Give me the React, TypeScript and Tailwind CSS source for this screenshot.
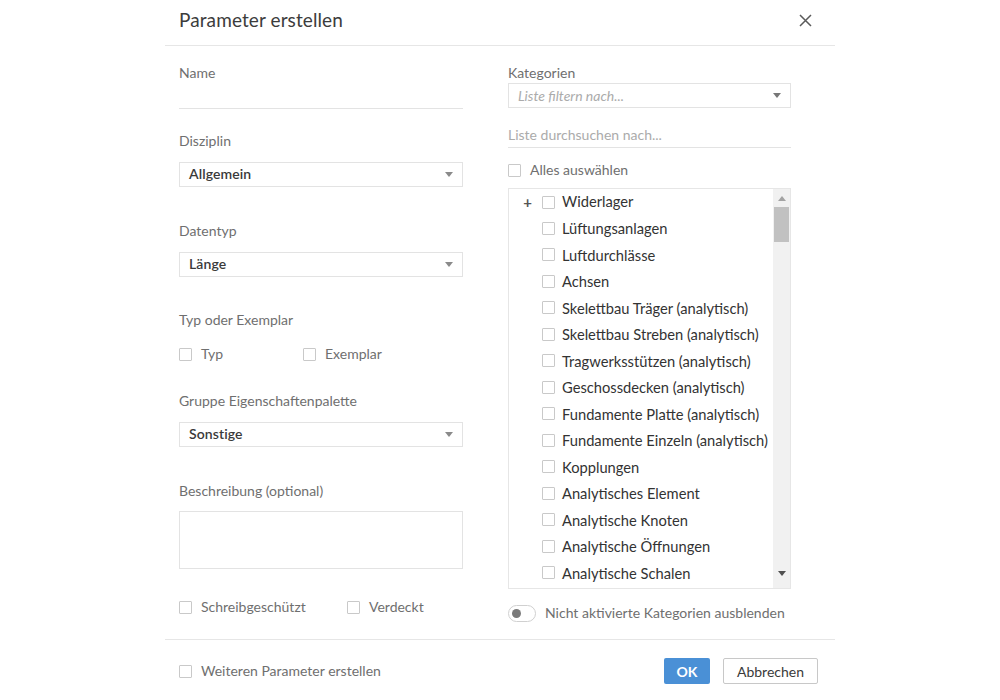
import React from "react";

const font = { fontFamily: "Lato, 'Noto Sans', sans-serif" };

function Box({ className = "" }: { className?: string }) {
  return <span className={"inline-block w-[13px] h-[13px] border border-[#c9c9c9] bg-white rounded-[1px] shrink-0 " + className} />;
}

function Caret({ color = "#8a8a8a" }: { color?: string }) {
  return (
    <svg width="8" height="5" viewBox="0 0 8 5" className="shrink-0">
      <path d="M0 0 L8 0 L4 5 Z" fill={color} />
    </svg>
  );
}

function Label({ children }: { children: React.ReactNode }) {
  return <div className="h-5 leading-5 text-[14px] text-[#6f6f6f]">{children}</div>;
}

function Select({ value }: { value: string }) {
  return (
    <div className="h-[25px] border border-[#e3e3e3] bg-white flex items-center justify-between pl-[9px] pr-[9px]">
      <span className="text-[14px] leading-[20px] -mt-[2px] text-[#3a3a3a] font-semibold tracking-[0.1px]">{value}</span>
      <Caret />
    </div>
  );
}

function Check({ label, className = "" }: { label: string; className?: string }) {
  return (
    <div className={"flex items-center h-5 " + className}>
      <Box />
      <span className="ml-[9px] text-[14px] leading-[20px] -mt-[1px] text-[#6f6f6f]">{label}</span>
    </div>
  );
}

const items = [
  "Widerlager",
  "Lüftungsanlagen",
  "Luftdurchlässe",
  "Achsen",
  "Skelettbau Träger (analytisch)",
  "Skelettbau Streben (analytisch)",
  "Tragwerksstützen (analytisch)",
  "Geschossdecken (analytisch)",
  "Fundamente Platte (analytisch)",
  "Fundamente Einzeln (analytisch)",
  "Kopplungen",
  "Analytisches Element",
  "Analytische Knoten",
  "Analytische Öffnungen",
  "Analytische Schalen",
];

export default function App() {
  return (
    <div className="w-[1000px] h-[700px] bg-white overflow-hidden" style={font}>
      <div className="w-[670px] mx-auto flex flex-col h-[700px]">
        {/* Header */}
        <div className="h-[46px] border-b border-[#e6e6e6] flex items-center justify-between pl-[14px] pr-[23px] shrink-0">
          <span className="text-[19px] text-[#3c3c3c] pb-[5px] tracking-[0.1px]">Parameter erstellen</span>
          <svg width="13" height="13" viewBox="0 0 13 13" className="mb-[5px]">
            <path d="M1 1 L12 12 M12 1 L1 12" stroke="#5a5a5a" strokeWidth="1.5" />
          </svg>
        </div>

        {/* Body */}
        <div className="h-[594px] border-b border-[#e6e6e6] flex pl-[14px] pt-[17px] shrink-0">
          {/* Left column */}
          <div className="w-[284px] flex flex-col">
            <Label>Name</Label>
            <div className="h-[26px] border-b border-[#e3e3e3]" />
            <div className="mt-[22px]"><Label>Disziplin</Label></div>
            <div className="mt-[11px]"><Select value="Allgemein" /></div>
            <div className="mt-[34px]"><Label>Datentyp</Label></div>
            <div className="mt-[11px]"><Select value="Länge" /></div>
            <div className="mt-[33px]"><Label>Typ oder Exemplar</Label></div>
            <div className="mt-[14px] flex">
              <Check label="Typ" className="w-[124px]" />
              <Check label="Exemplar" />
            </div>
            <div className="mt-[27px]"><Label>Gruppe Eigenschaftenpalette</Label></div>
            <div className="mt-[11px]"><Select value="Sonstige" /></div>
            <div className="mt-[34px]"><Label>Beschreibung (optional)</Label></div>
            <div className="mt-[10px] h-[58px] border border-[#e3e3e3]" />
            <div className="mt-[28px] flex">
              <Check label="Schreibgeschützt" className="w-[168px]" />
              <Check label="Verdeckt" />
            </div>
          </div>

          {/* Right column */}
          <div className="ml-[45px] w-[283px] flex flex-col">
            <Label>Kategorien</Label>
            <div className="h-[25px] border border-[#e3e3e3] flex items-center justify-between pl-[9px] pr-[9px]">
              <span className="text-[14px] italic text-[#ababab]">Liste filtern nach...</span>
              <Caret color="#777" />
            </div>
            <div className="mt-[13px] h-[27px] border-b border-[#e3e3e3] flex items-center">
              <span className="text-[14px] text-[#ababab]">Liste durchsuchen nach...</span>
            </div>
            <div className="mt-[12px]">
              <Check label="Alles auswählen" />
            </div>
            <div className="mt-[8px] h-[401px] border border-[#e6e6e6] flex overflow-hidden">
              <div className="flex-1 flex flex-col">
                {items.map((it, i) => (
                  <div
                    key={it}
                    className={(i === 0 ? "h-[26px] " : "h-[26.5px] ") + "flex items-center shrink-0"}
                  >
                    <span className="w-[33px] flex justify-end pr-[10px] text-[#555] text-[15px] font-bold leading-none">
                      {i === 0 ? "+" : ""}
                    </span>
                    <Box />
                    <span
                      className={
                        (i === 0 ? "-mt-[2px] " : "") +
                        "ml-[7px] text-[14.7px] leading-[20px] text-[#333] whitespace-nowrap"
                      }
                    >
                      {it}
                    </span>
                  </div>
                ))}
              </div>
              <div className="w-[17px] bg-[#f1f1f1] flex flex-col items-center shrink-0">
                <div className="h-[18px] flex items-center justify-center">
                  <svg width="8" height="5" viewBox="0 0 8 5"><path d="M0 5 L8 5 L4 0 Z" fill="#a3a3a3" /></svg>
                </div>
                <div className="w-[15px] h-[35px] bg-[#c1c1c1]" />
                <div className="flex-1" />
                <div className="h-[18px] flex items-center justify-center mb-[6px]">
                  <svg width="8" height="5" viewBox="0 0 8 5"><path d="M0 0 L8 0 L4 5 Z" fill="#505050" /></svg>
                </div>
              </div>
            </div>
            <div className="mt-[14px] flex items-center h-5">
              <div className="w-[28px] h-[17px] rounded-full border border-[#d0d0d0] flex items-center pl-[2px]">
                <div className="w-[9px] h-[9px] rounded-full bg-[#7a7a7a] ml-[1px]" />
              </div>
              <span className="ml-[9px] text-[14px] leading-[20px] -mt-[1px] text-[#6f6f6f]">Nicht aktivierte Kategorien ausblenden</span>
            </div>
          </div>
        </div>

        {/* Footer */}
        <div className="flex items-center justify-between pl-[14px] pr-[17px] pt-[2px] h-[60px]">
          <Check label="Weiteren Parameter erstellen" />
          <div className="flex items-center gap-[13px]">
            <button className="w-[46px] h-[26px] bg-[#4a90d6] text-white text-[14px] font-bold rounded-[2px]">OK</button>
            <button className="w-[95px] h-[26px] border border-[#c8c8c8] bg-white text-[#3a3a3a] text-[14px] rounded-[2px]">Abbrechen</button>
          </div>
        </div>
      </div>
    </div>
  );
}
